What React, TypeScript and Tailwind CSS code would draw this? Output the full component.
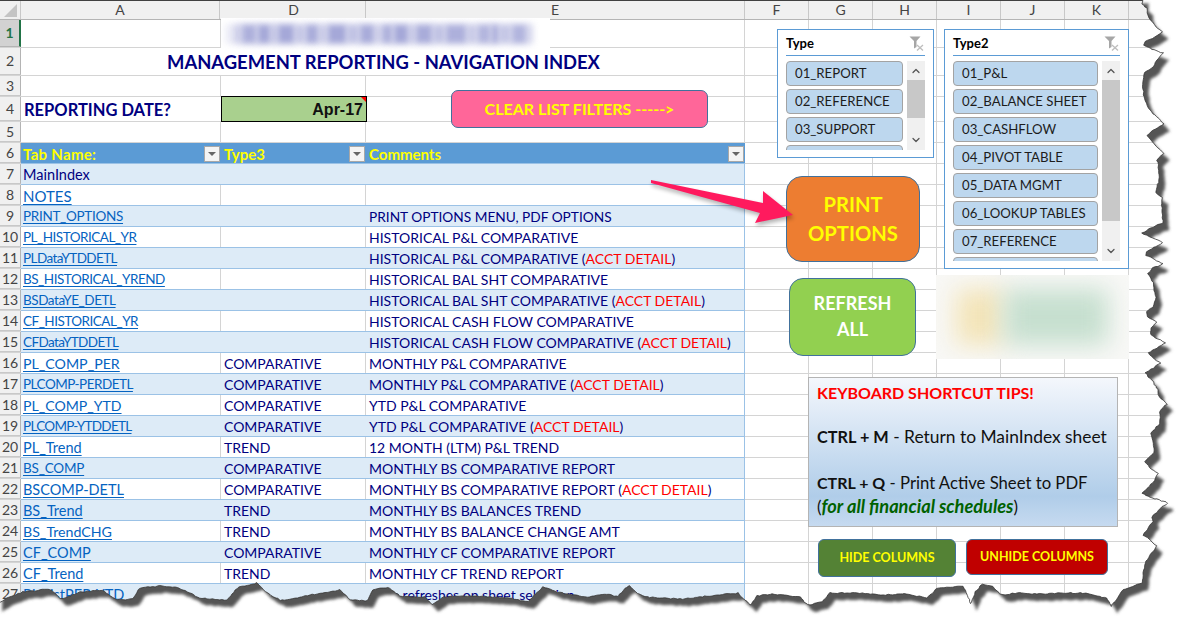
import React from "react";
import { ChevronDown, ChevronUp } from "lucide-react";

const edge: [number, number][] = [
  [1143,-4],[1142,4],[1147,8],[1148,15],[1151,20],[1156,27],[1162,32],[1155,37],[1145,42],[1144,45],[1152,49],[1163,53],[1157,60],[1153,67],[1145,72],[1143,80],[1143,87],[1144,97],[1146,103],[1150,110],[1157,117],[1164,124],[1153,130],[1147,135],[1152,142],[1158,148],[1164,153],[1157,160],[1159,170],[1159,180],[1156,192],[1162,198],[1162,210],[1163,223],[1153,227],[1142,233],[1150,237],[1158,240],[1163,243],[1158,245],[1147,252],[1146,255],[1155,260],[1163,264],[1153,268],[1148,273],[1153,283],[1156,300],[1153,307],[1147,312],[1148,317],[1157,322],[1151,328],[1151,335],[1165,343],[1148,353],[1153,358],[1161,363],[1145,373],[1152,380],[1158,390],[1159,397],[1167,404],[1160,410],[1160,423],[1151,433],[1153,443],[1154,453],[1145,462],[1150,468],[1158,473],[1153,483],[1142,493],[1150,497],[1168,503],[1162,507],[1152,517],[1153,522],[1143,535],[1157,546],[1150,555],[1145,563],[1142,583],[1123,590],[1118,597],[1111,606],[1107,598],[1083,593],[1063,593],[1037,594],[1017,593],[1003,595],[1000,594],[993,586],[982,584],[975,592],[971,604],[963,586],[947,587],[937,588],[927,598],[907,594],[883,595],[857,593],[830,593],[822,602],[810,605],[804,602],[800,597],[770,594],[757,596],[750,605],[745,600],[738,593],[717,595],[683,599],[660,598],[645,597],[637,593],[629,586],[623,590],[618,597],[607,594],[587,597],[557,592],[543,587],[528,602],[510,598],[467,596],[443,597],[432,605],[425,597],[400,596],[388,587],[373,590],[367,601],[350,600],[340,590],[310,595],[287,600],[280,600],[267,593],[257,583],[237,588],[227,600],[200,598],[192,594],[177,587],[160,586],[140,588],[133,599],[117,600],[102,590],[80,592],[63,599],[60,598],[50,589],[23,592],[7,598],[0,602],[-6,606],
];

function jagged(): string {
  let seed = 17;
  const rnd = () => {
    seed = (seed * 9301 + 49297) % 233280;
    return seed / 233280 - 0.5;
  };
  const out: string[] = [];
  for (let i = 0; i < edge.length - 1; i++) {
    const [x0, y0] = edge[i];
    const [x1, y1] = edge[i + 1];
    const steps = Math.max(1, Math.round(Math.hypot(x1 - x0, y1 - y0) / 2.5));
    for (let s = 0; s < steps; s++) {
      const t = s / steps;
      out.push(`${(x0 + (x1 - x0) * t + rnd() * 1.1).toFixed(1)} ${(y0 + (y1 - y0) * t + rnd() * 1.1).toFixed(1)}`);
    }
  }
  return out.join("L");
}
const edgeLine = "M" + jagged();
const sheetShape = "M-6 -6L" + edgeLine.slice(1) + "Z";

type Row = { n: number; a: string; s?: string; t?: string; c?: string; red?: boolean; plain?: boolean };
const rows: Row[] = [
  { n: 7, a: "MainIndex", plain: true, s: "text-[14.5px]" },
  { n: 8, a: "NOTES", s: "text-[15px]" },
  { n: 9, a: "PRINT_OPTIONS", s: "text-[13.5px] tracking-[-0.3px]", c: "PRINT OPTIONS MENU, PDF OPTIONS" },
  { n: 10, a: "PL_HISTORICAL_YR", s: "text-[13.5px] tracking-[-0.5px]", c: "HISTORICAL P&L COMPARATIVE" },
  { n: 11, a: "PLDataYTDDETL", s: "text-[13.5px] tracking-[-0.58px]", c: "HISTORICAL P&L COMPARATIVE (", red: true },
  { n: 12, a: "BS_HISTORICAL_YREND", s: "text-[13.5px] tracking-[-0.47px]", c: "HISTORICAL BAL SHT COMPARATIVE" },
  { n: 13, a: "BSDataYE_DETL", s: "text-[13.5px] tracking-[-0.44px]", c: "HISTORICAL BAL SHT COMPARATIVE (", red: true },
  { n: 14, a: "CF_HISTORICAL_YR", s: "text-[13.5px] tracking-[-0.5px]", c: "HISTORICAL CASH FLOW COMPARATIVE" },
  { n: 15, a: "CFDataYTDDETL", s: "text-[13.5px] tracking-[-0.6px]", c: "HISTORICAL CASH FLOW COMPARATIVE (", red: true },
  { n: 16, a: "PL_COMP_PER", s: "text-[14.2px]", t: "COMPARATIVE", c: "MONTHLY P&L COMPARATIVE" },
  { n: 17, a: "PLCOMP-PERDETL", s: "text-[13.5px] tracking-[-0.5px]", t: "COMPARATIVE", c: "MONTHLY P&L COMPARATIVE (", red: true },
  { n: 18, a: "PL_COMP_YTD", s: "text-[14.1px]", t: "COMPARATIVE", c: "YTD P&L COMPARATIVE" },
  { n: 19, a: "PLCOMP-YTDDETL", s: "text-[13.5px] tracking-[-0.7px]", t: "COMPARATIVE", c: "YTD P&L COMPARATIVE (", red: true },
  { n: 20, a: "PL_Trend", s: "text-[14.5px]", t: "TREND", c: "12 MONTH (LTM) P&L TREND" },
  { n: 21, a: "BS_COMP", s: "text-[13.5px] tracking-[-0.2px]", t: "COMPARATIVE", c: "MONTHLY BS COMPARATIVE REPORT" },
  { n: 22, a: "BSCOMP-DETL", s: "text-[14.5px]", t: "COMPARATIVE", c: "MONTHLY BS COMPARATIVE REPORT (", red: true },
  { n: 23, a: "BS_Trend", s: "text-[14.5px]", t: "TREND", c: "MONTHLY BS BALANCES TREND" },
  { n: 24, a: "BS_TrendCHG", s: "text-[14.2px]", t: "TREND", c: "MONTHLY BS BALANCE CHANGE AMT" },
  { n: 25, a: "CF_COMP", s: "text-[14.5px]", t: "COMPARATIVE", c: "MONTHLY CF COMPARATIVE REPORT" },
  { n: 26, a: "CF_Trend", s: "text-[14.5px]", t: "TREND", c: "MONTHLY CF TREND REPORT" },
  { n: 27, a: "PLHistPER-YTD", s: "text-[14.5px]", c: "Auto refreshes on sheet selection" },
];

function RightCells() {
  return (
    <>
      <div className="w-[64px] border-r border-[#d4d4d4]" />
      <div className="w-[64px] border-r border-[#d4d4d4]" />
      <div className="w-[64px] border-r border-[#d4d4d4]" />
      <div className="w-[64px] border-r border-[#d4d4d4]" />
      <div className="w-[64px] border-r border-[#d4d4d4]" />
      <div className="w-[64px] border-r border-[#d4d4d4]" />
      <div className="flex-1" />
    </>
  );
}

function RowHead({ n, active }: { n: number; active?: boolean }) {
  return (
    <div
      className={
        active
          ? "w-[21px] shrink-0 flex items-center justify-center bg-[#d2d2d2] border-r-2 border-r-[#217346] border-b border-b-[#b4b4b4] text-[#217346] font-bold text-[14px]"
          : "w-[21px] shrink-0 flex items-center justify-center bg-[#f0f0f0] border-r border-r-[#b4b4b4] border-b border-b-[#c8c8c8] text-[#444] text-[14px] overflow-hidden"
      }
    >
      {n}
    </div>
  );
}

function Dropdown() {
  return (
    <div className="absolute right-[1px] top-[3px] w-[16px] h-[16px] bg-[#f4f4f4] border border-[#a8a8a8] flex items-center justify-center">
      <div className="w-0 h-0 border-l-[4px] border-r-[4px] border-t-[4px] border-l-transparent border-r-transparent border-t-[#666]" />
    </div>
  );
}

function ClearIcon() {
  return (
    <svg width="16" height="16" viewBox="0 0 16 16" className="shrink-0">
      <path d="M0.5 0.5H11.5L7.5 5V11L5 12.5V5Z" fill="#a6a6a6" />
      <path d="M8 9L14 14.5M14 9L8 14.5" stroke="#bdbdbd" strokeWidth="1.3" />
    </svg>
  );
}

function Slicer({ title, items, thumbTop, thumbH, outer, track }: { title: string; items: string[]; thumbTop: string; thumbH: string; outer: string; track: string }) {
  return (
    <div className={"bg-white border-[1.5px] border-[#5b9bd5] flex flex-col pt-[3px] px-[8px] " + outer}>
      <div className="flex items-center justify-between h-[23px] border-b-[1.5px] border-[#5b9bd5] shrink-0 pb-[1px]">
        <span className="text-[13px] font-bold text-black">{title}</span>
        <ClearIcon />
      </div>
      <div className={"flex justify-between mt-[5px] overflow-hidden " + track}>
        <div className="flex-1 flex flex-col gap-[3px] mr-[4px] overflow-hidden">
          {items.map((t, i) => (
            <div key={i} className="h-[25px] shrink-0 bg-[#bdd7ee] border border-[#a3a3a3] rounded-[4px] flex items-center pl-[8px] text-[13.2px] text-[#1c1c1c]">
              {t}
            </div>
          ))}
        </div>
        <div className="w-[18px] shrink-0 bg-[#f0f0f0] flex flex-col items-center justify-between relative">
          <ChevronUp size={12} strokeWidth={2.5} color="#555" className="mt-[4px]" />
          <div className={"absolute left-0 w-full bg-[#c8c8c8] " + thumbTop + " " + thumbH} />
          <ChevronDown size={12} strokeWidth={2.5} color="#555" className="mb-[4px]" />
        </div>
      </div>
    </div>
  );
}

const titleBars: [number, number][] = [[8,0.2],[8,0.55],[16,0.9],[14,1],[6,0.7],[18,1],[10,0.65],[14,0.95],[8,0.6],[20,1],[12,0.7],[16,0.95],[6,0.55],[12,0.9],[16,1],[6,0.65],[18,0.95],[12,0.7],[22,0.9],[10,0.6],[14,0.85],[8,1],[12,0.65],[16,0.85],[6,0.45]];

export default function App() {
  return (
    <div className="relative w-[1188px] h-[629px] overflow-hidden bg-white [font-family:Lato,'Noto_Sans',sans-serif] text-[14px] leading-none">
      <div className="flex flex-col w-full border-t border-[#404040]">
        {/* column letters */}
        <div className="flex h-[19px] bg-[#f0f0f0] border-b border-[#b4b4b4] text-[14px] text-[#444]">
          <div className="w-[21px] border-r border-[#c8c8c8] relative">
            <div className="absolute right-[3px] bottom-[2px] w-0 h-0 border-l-[13px] border-b-[13px] border-l-transparent border-b-[#c4c4c4]" />
          </div>
          <div className="w-[199px] border-r border-[#c8c8c8] flex items-center justify-center">A</div>
          <div className="w-[146px] border-l-[2px] border-l-[#f0f0f0] border-r border-[#c8c8c8] flex items-center justify-center">D</div>
          <div className="w-[379px] border-r border-[#c8c8c8] flex items-center justify-center">E</div>
          {["F", "G", "H", "I", "J", "K"].map((c) => (
            <div key={c} className="w-[64px] border-r border-[#c8c8c8] flex items-center justify-center">{c}</div>
          ))}
          <div className="flex-1" />
        </div>

        {/* row 1 */}
        <div className="flex h-[28px] border-b border-[#d4d4d4]">
          <RowHead n={1} active />
          <div className="w-[200px] border-r border-[#d4d4d4]" />
          <div className="w-[524px] border-r border-[#d4d4d4]" />
          <RightCells />
        </div>
        {/* row 2 */}
        <div className="flex h-[28px] border-b border-[#d4d4d4]">
          <RowHead n={2} />
          <div className="w-[724px] border-r border-[#d4d4d4] flex items-center justify-center text-[18.4px] font-bold text-[#000080] pt-[2px] pl-[2px]">
            MANAGEMENT REPORTING - NAVIGATION INDEX
          </div>
          <RightCells />
        </div>
        {/* row 3 */}
        <div className="flex h-[21px] border-b border-[#d4d4d4]">
          <RowHead n={3} />
          <div className="w-[200px] border-r border-[#d4d4d4]" />
          <div className="w-[145px] border-r border-[#d4d4d4]" />
          <div className="w-[379px] border-r border-[#d4d4d4]" />
          <RightCells />
        </div>
        {/* row 4 */}
        <div className="flex h-[25px] border-b border-[#d4d4d4]">
          <RowHead n={4} />
          <div className="w-[200px] flex items-center pl-[3px] pt-[2px] text-[16.5px] font-bold text-[#000080]">REPORTING DATE?</div>
          <div className="w-[146px] -mt-px h-[26px] bg-[#a9d08e] border border-black flex items-center justify-end pr-[3px] pt-[1px] relative font-bold text-[#111] text-[16px] [font-family:'Liberation_Sans',sans-serif]">
            Apr-17
            <div className="absolute right-0 top-0 w-0 h-0 border-l-[5px] border-t-[5px] border-l-transparent border-t-[#ff0000]" />
          </div>
          <div className="w-[378px] border-r border-[#d4d4d4]" />
          <RightCells />
        </div>
        {/* row 5 */}
        <div className="flex h-[21px] border-b border-[#d4d4d4]">
          <RowHead n={5} />
          <div className="w-[200px] border-r border-[#d4d4d4]" />
          <div className="w-[145px] border-r border-[#d4d4d4]" />
          <div className="w-[379px] border-r border-[#d4d4d4]" />
          <RightCells />
        </div>
        {/* row 6 */}
        <div className="flex h-[21px] border-b border-[#d4d4d4]">
          <RowHead n={6} />
          <div className="flex w-[724px] bg-[#5b9bd5] border-b border-[#9bc2e6] font-bold text-[#ffff00] text-[15px] -mb-px">
            <div className="relative w-[200px] flex items-center pl-[2px] pt-[2px] tracking-[0.3px]">Tab Name:<Dropdown /></div>
            <div className="relative w-[145px] flex items-center pl-[3px] pt-[2px]">Type3<Dropdown /></div>
            <div className="relative w-[379px] flex items-center pl-[3px] pt-[2px]">Comments<Dropdown /></div>
          </div>
          <RightCells />
        </div>
        {/* table rows */}
        {rows.map((r) => {
          const band = r.n % 2 === 1;
          return (
            <div key={r.n} className="flex h-[21px] border-b border-[#d4d4d4]">
              <RowHead n={r.n} />
              <div className={"flex w-[724px] -mb-px border-b border-[#9bc2e6] border-r text-[#000080] " + (band ? "bg-[#ddebf7]" : "bg-white")}>
                <div className={"w-[200px] flex items-center pl-[2px] pt-[2px] " + r.s + " " + (band ? "" : "border-r border-[#d4d4d4]")}>
                  {r.plain ? r.a : <span className="underline text-[#0563c1] underline-offset-[2px]">{r.a}</span>}
                </div>
                <div className={"w-[145px] flex items-center pl-[3px] pt-[2px] " + (band ? "" : "border-r border-[#d4d4d4]")}>{r.t}</div>
                <div className={"flex-1 flex items-center pl-[3px] pt-[2px] whitespace-nowrap " + (r.n === 9 ? "text-[13.7px]" : "")}>
                  {r.c}
                  {r.red && (
                    <>
                      <span className="text-[#ff0000]">ACCT DETAIL</span>)
                    </>
                  )}
                </div>
              </div>
              <RightCells />
            </div>
          );
        })}
        <div className="flex h-[21px] border-b border-[#d4d4d4]">
          <RowHead n={28} />
          <div className="w-[200px] border-r border-[#d4d4d4]" />
          <div className="w-[145px] border-r border-[#d4d4d4]" />
          <div className="w-[379px] border-r border-[#d4d4d4]" />
          <RightCells />
        </div>
      </div>

      {/* blurred title picture, floats over the sheet */}
      <div className="absolute left-[221px] top-[18px] w-[329px] h-[32px] bg-white overflow-hidden flex items-center px-[4px]">
        {titleBars.map(([w, o], i) => (
          <div key={i} className="h-[20px] bg-[#a5a8d8] blur-[3px]" style={{ width: w, opacity: o }} />
        ))}
      </div>

      {/* clear filters button */}
      <div className="absolute left-[451px] top-[90px] w-[257px] h-[38px] rounded-[7px] bg-[#ff6699] border border-[#41719c] flex items-center justify-center font-bold text-[#ffff00] text-[16px]">
        CLEAR LIST FILTERS -----&gt;
      </div>

      {/* floating panel on the right */}
      <div className="absolute left-[777px] top-[29px] w-[352px] flex flex-col">
        <div className="flex gap-[10px] items-start">
          <div className="w-[157px] flex flex-col">
            <Slicer
              title="Type"
              items={["01_REPORT", "02_REFERENCE", "03_SUPPORT", ""]}
              thumbTop="top-[19px]"
              thumbH="h-[38px]"
              outer="h-[129px]"
              track="h-[89px]"
            />
            <div className="mt-[18px] ml-[9px] w-[134px] h-[86px] rounded-[16px] bg-[#ed7d31] border border-[#41719c] flex items-center justify-center text-center font-bold text-[#ffff00] text-[20.2px] leading-[29px] pb-[1px]">
              PRINT<br />OPTIONS
            </div>
            <div className="mt-[16px] ml-[12px] w-[127px] h-[78px] rounded-[14px] bg-[#92d050] border border-[#41719c] flex items-center justify-center text-center font-bold text-white text-[18px] leading-[26px] pb-[2px]">
              REFRESH<br />ALL
            </div>
          </div>
          <div className="w-[185px] flex flex-col">
            <Slicer
              title="Type2"
              items={["01_P&L", "02_BALANCE SHEET", "03_CASHFLOW", "04_PIVOT TABLE", "05_DATA MGMT", "06_LOOKUP TABLES", "07_REFERENCE", ""]}
              thumbTop="top-[19px]"
              thumbH="h-[141px]"
              outer="h-[240px]"
              track="h-[200px]"
            />
            <div className="mt-[6px] -ml-[8px] w-[193px] h-[84px] bg-[#f8f8f6] overflow-hidden relative flex items-center pl-[20px]">
              <div className="w-[48px] h-[56px] bg-[#f3e4b8] blur-[12px]" />
              <div className="w-[104px] h-[56px] bg-[#c6dfcf] blur-[12px]" />
            </div>
          </div>
        </div>

        <div className="mt-[18px] ml-[31px] w-[310px] h-[150px] border border-[#b4b4b4] bg-gradient-to-b from-[#f4f7fc] via-[#b0cde9] via-80% to-[#c6daf0] pl-[8px] pt-[5px] text-[17px] text-[#111] flex flex-col">
          <div className="font-bold text-[#ff0000] h-[23px] leading-[20px] text-[16px]">KEYBOARD SHORTCUT TIPS!</div>
          <div className="mt-[20px] h-[23px] leading-[22px] text-[17.4px] whitespace-nowrap"><b className="text-[16.3px]">CTRL + M</b> - Return to MainIndex sheet</div>
          <div className="mt-[23px] h-[23px] leading-[22px] text-[16.7px] whitespace-nowrap"><b className="text-[16px]">CTRL + Q</b> - Print Active Sheet to PDF</div>
          <div className="h-[23px] leading-[22px] text-[17px] whitespace-nowrap">(<b className="italic text-[#006100] text-[18.2px]">for all financial schedules</b>)</div>
        </div>

        <div className="mt-[12px] ml-[41px] flex gap-[10px] items-start">
          <div className="w-[138px] h-[38px] rounded-[6px] bg-[#548235] border border-[#41719c] flex items-center justify-center font-bold text-[#ffff00] text-[12.5px]">HIDE COLUMNS</div>
          <div className="w-[142px] h-[36px] rounded-[6px] bg-[#c00000] border border-[#41719c] flex items-center justify-center font-bold text-[#ffff00] text-[12.5px]">UNHIDE COLUMNS</div>
        </div>
      </div>

      {/* callout arrow */}
      <svg className="absolute left-0 top-0 pointer-events-none" width="1188" height="629" viewBox="0 0 1188 629">
        <defs>
          <filter id="arrowShadow" x="-10%" y="-30%" width="120%" height="160%">
            <feGaussianBlur stdDeviation="2" />
          </filter>
        </defs>
        <path d="M651 180L763 203L763 191L793 215L755 223L760 213L651 183Z" fill="#000" opacity="0.3" filter="url(#arrowShadow)" transform="translate(1 3)" />
        <path d="M651 180L763 203L763 191L793 215L755 223L760 213L651 183Z" fill="#ff1a5e" />
      </svg>

      {/* torn paper edge and its shadow */}
      <svg className="absolute left-0 top-0 pointer-events-none" width="1188" height="629" viewBox="0 0 1188 629">
        <defs>
          <clipPath id="outside">
            <path clipRule="evenodd" d={"M-10 -10H1200V640H-10Z" + sheetShape} />
          </clipPath>
          <filter id="tornShadow" x="-5%" y="-5%" width="110%" height="110%">
            <feGaussianBlur stdDeviation="1.4" />
          </filter>
        </defs>
        <path fillRule="evenodd" fill="#ffffff" d={"M-10 -10H1200V640H-10Z" + sheetShape} />
        <g clipPath="url(#outside)">
          <path d={sheetShape} transform="translate(6 7)" fill="#555555" filter="url(#tornShadow)" />
        </g>
        <path d={edgeLine} fill="none" stroke="#333333" strokeWidth="0.8" />
      </svg>
    </div>
  );
}
